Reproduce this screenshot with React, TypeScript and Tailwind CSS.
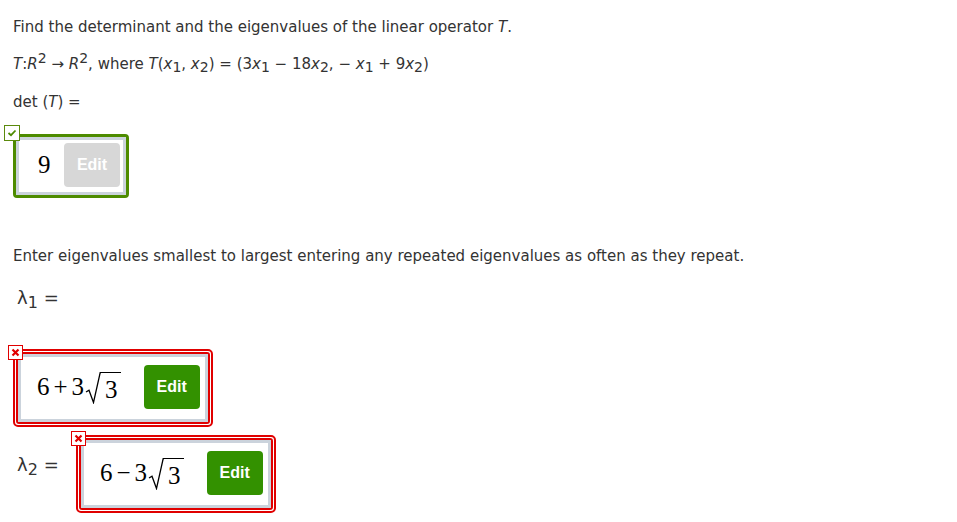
import React from "react";

function Sub({ children }: { children: React.ReactNode }) {
  return <span className="align-[-3px] text-[14px] leading-none not-italic">{children}</span>;
}

function Sup({ children }: { children: React.ReactNode }) {
  return <span className="align-[6px] text-[14px] leading-none not-italic">{children}</span>;
}

// radical sign + overlined radicand
function Sqrt({ children }: { children: React.ReactNode }) {
  return (
    <span className="ml-[1px] inline-flex items-start">
      <svg width="16" height="32" viewBox="0 0 16 32" className="mt-[1px]">
        <path d="M1 20 L4 18.2 L8.5 30.5 L15.2 0.6 L16 0.6" fill="none" stroke="#000" strokeWidth="1.3" />
      </svg>
      <span className="mt-[1px] border-t-[1.3px] border-black pl-[4px] pr-[3px] pt-[3px] leading-[28px]">
        {children}
      </span>
    </span>
  );
}

function CheckBadge() {
  return (
    <div className="absolute -left-[9px] -top-[9px] flex h-[16px] w-[16px] items-center justify-center border border-[#5b8a0c] bg-white">
      <svg width="10" height="8" viewBox="0 0 10 8">
        <path d="M1.5 4 L4 6.2 L8.5 1.5" fill="none" stroke="#4d8b00" strokeWidth="1.8" />
      </svg>
    </div>
  );
}

function CrossBadge() {
  return (
    <div className="absolute -left-[5px] -top-[4px] z-10 flex h-[15px] w-[15px] items-center justify-center border border-[#e00000] bg-white">
      <svg width="9" height="9" viewBox="0 0 9 9">
        <path d="M1.5 1.5 L7.5 7.5 M7.5 1.5 L1.5 7.5" stroke="#e00000" strokeWidth="2.2" />
      </svg>
    </div>
  );
}

function EditButton({ disabled }: { disabled?: boolean }) {
  return (
    <button
      className={`h-[44px] w-[56px] shrink-0 rounded-[4px] text-[16px] font-bold text-white ${
        disabled ? "bg-[#d7d7d7]" : "bg-[#339100]"
      }`}
      style={{ fontFamily: "'Liberation Sans', Arial, sans-serif" }}
    >
      Edit
    </button>
  );
}

function WrongBox({ children }: { children: React.ReactNode }) {
  return (
    <div className="relative">
      <CrossBadge />
      <div className="rounded-[5px] border-2 border-[#e00000] p-px">
        <div className="rounded-[3px] border-2 border-[#e00000]">
          <div className="border-[3px] border-[#cbd3dc] bg-white">
            <div className="flex items-center gap-[23px] pb-[10px] pl-[16px] pr-[5px] pt-[8px]">
              <span
                className="flex items-center text-[25px] text-black"
                style={{ fontFamily: "'Liberation Serif', 'Times New Roman', serif" }}
              >
                {children}
              </span>
              <EditButton />
            </div>
          </div>
        </div>
      </div>
    </div>
  );
}

function Lambda({ n }: { n: string }) {
  return (
    <div className="flex items-baseline gap-[6px] pl-[4px] text-[18px] leading-[24px]">
      <span>
        λ<span className="align-[-4px] text-[16px] leading-none">{n}</span>
      </span>
      <span>=</span>
    </div>
  );
}

export default function App() {
  return (
    <div
      className="flex min-h-[522px] flex-col items-start bg-white pl-[13px] pt-[17px] text-[15px] leading-[20px] text-[#333]"
      style={{ fontFamily: "'DejaVu Sans', Verdana, sans-serif" }}
    >
      <p>
        Find the determinant and the eigenvalues of the linear operator <i>T</i>.
      </p>
      <p className="mt-[14px]">
        <i>T</i>:<i>R</i>
        <Sup>2</Sup> <span className="text-[15px]">→</span> <i>R</i>
        <Sup>2</Sup>, where <i>T</i>(<i>x</i>
        <Sub>1</Sub>, <i>x</i>
        <Sub>2</Sub>) = (3<i>x</i>
        <Sub>1</Sub> − 18<i>x</i>
        <Sub>2</Sub>, − <i>x</i>
        <Sub>1</Sub> + 9<i>x</i>
        <Sub>2</Sub>)
      </p>
      <p className="mt-[18px]">
        det (<i>T</i>) =
      </p>

      <div className="relative mt-[22px]">
        <CheckBadge />
        <div className="rounded-[4px] border-[3px] border-[#4d8b00]">
          <div className="flex items-center gap-[14px] border-[3px] border-[#cbd3dc] bg-white pb-[5px] pl-[19px] pr-[3px] pt-[3px]">
            <span
              className="w-[12px] text-[25px] text-black"
              style={{ fontFamily: "'Liberation Serif', 'Times New Roman', serif" }}
            >
              9
            </span>
            <EditButton disabled />
          </div>
        </div>
      </div>

      <p className="mt-[48px]">
        Enter eigenvalues smallest to largest entering any repeated eigenvalues as often as they repeat.
      </p>

      <div className="mt-[20px]">
        <Lambda n="1" />
      </div>

      <div className="mt-[38px] flex flex-col items-start gap-[8px]">
        <WrongBox>
          6<span className="mx-[4px]">+</span>3
          <Sqrt>3</Sqrt>
        </WrongBox>

        <div className="flex items-start">
          <div className="w-[63px] pt-[18px]">
            <Lambda n="2" />
          </div>
          <WrongBox>
            6<span className="mx-[4px]">−</span>3
            <Sqrt>3</Sqrt>
          </WrongBox>
        </div>
      </div>
    </div>
  );
}
